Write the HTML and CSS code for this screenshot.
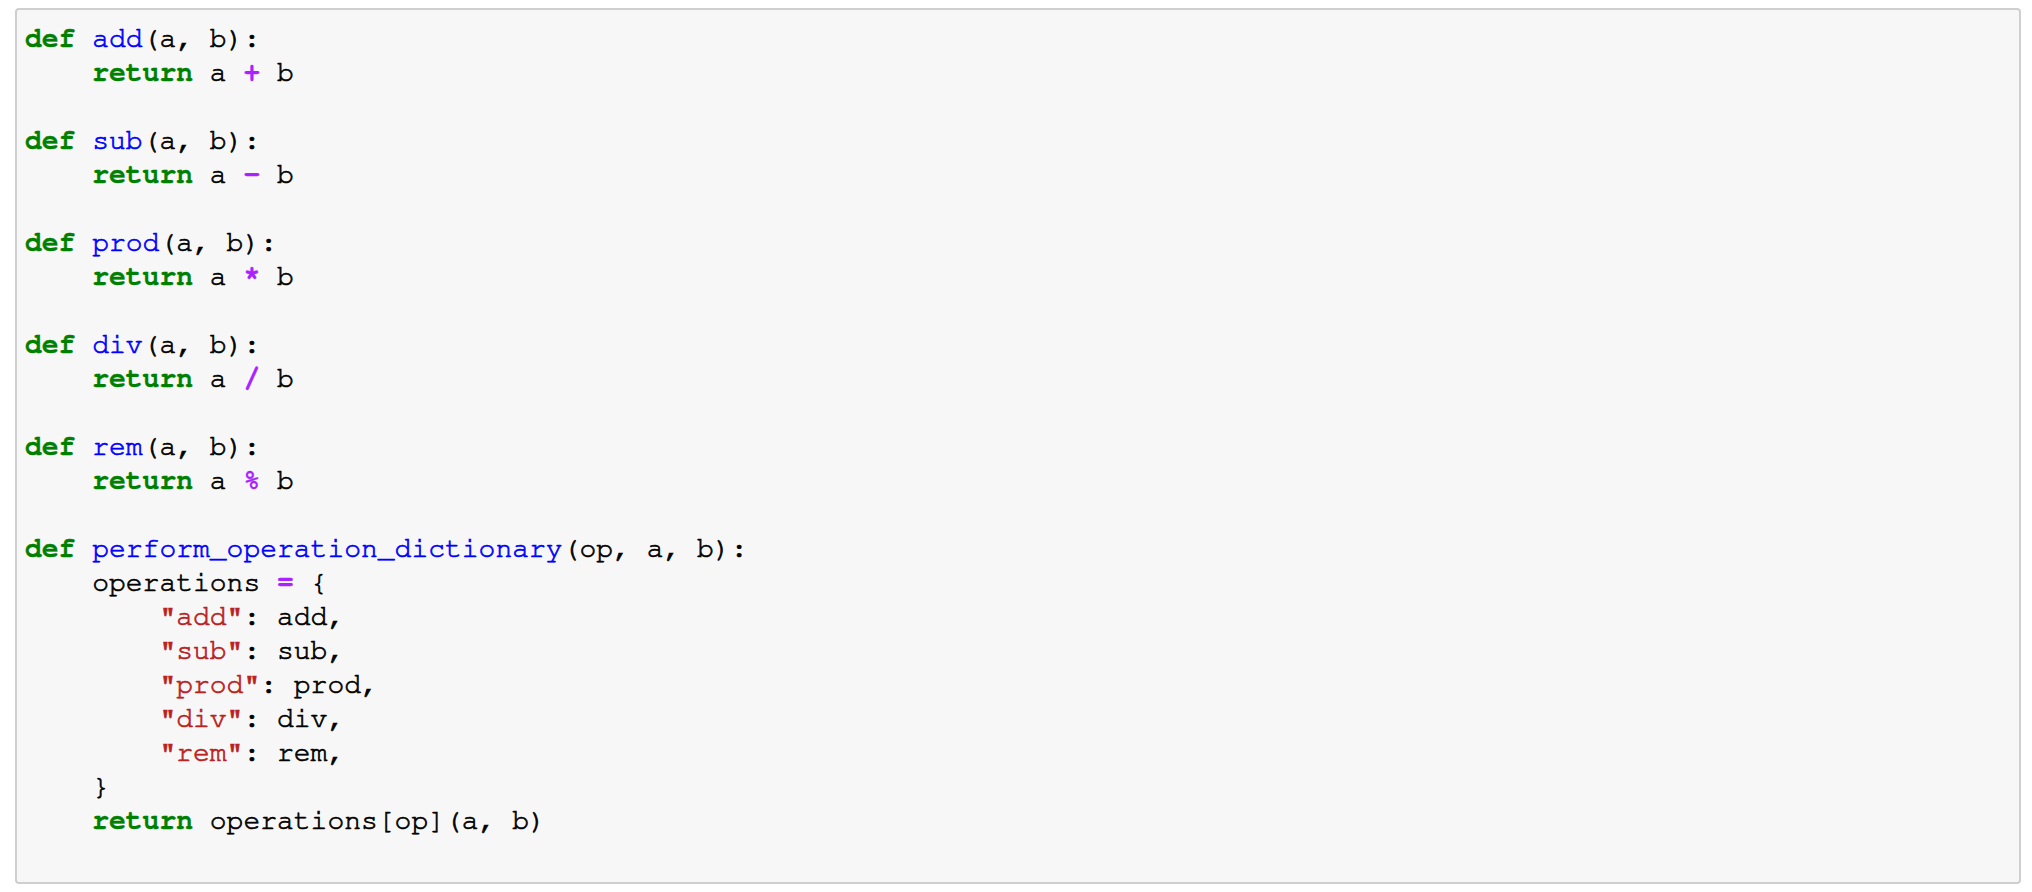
FILE: index.html
```html
<!DOCTYPE html>
<html>
<head>
<meta charset="utf-8">
<link rel="stylesheet" href="styles.css">
</head>
<body>
<div class="page">
<div class="cell">
<pre class="code"><span class="kw">def</span> <span class="fn">add</span>(a, b):
    <span class="kw">return</span> a <span class="op">+</span> b

<span class="kw">def</span> <span class="fn">sub</span>(a, b):
    <span class="kw">return</span> a <span class="op">-</span> b

<span class="kw">def</span> <span class="fn">prod</span>(a, b):
    <span class="kw">return</span> a <span class="op">*</span> b

<span class="kw">def</span> <span class="fn">div</span>(a, b):
    <span class="kw">return</span> a <span class="op">/</span> b

<span class="kw">def</span> <span class="fn">rem</span>(a, b):
    <span class="kw">return</span> a <span class="op">%</span> b

<span class="kw">def</span> <span class="fn">perform_operation_dictionary</span>(op, a, b):
    operations <span class="op">=</span> {
        <span class="str">"add"</span>: add,
        <span class="str">"sub"</span>: sub,
        <span class="str">"prod"</span>: prod,
        <span class="str">"div"</span>: div,
        <span class="str">"rem"</span>: rem,
    }
    <span class="kw">return</span> operations[op](a, b)</pre>
</div>
</div>
</body>
</html>
```

FILE: styles.css
```css
html, body {
  margin: 0;
  padding: 0;
  background: #ffffff;
}

.page {
  padding: 8px 11px 8px 15px;
}

.cell {
  background: #f7f7f7;
  border: 2px solid #cfcfcf;
  border-radius: 4px;
  padding: 12px 8px 44px 8px;
}

.code {
  margin: 0;
  font-family: "Nimbus Mono PS", "Nimbus Mono L", "FreeMono", "Liberation Mono", "Courier New", monospace;
  font-size: 28px;
  line-height: 34px;
  color: #000000;
  white-space: pre;
  -webkit-text-stroke: 0.7px currentColor;
}

.kw {
  color: #008000;
  font-weight: bold;
  -webkit-text-stroke: 0.3px currentColor;
}

.fn {
  color: #0000ff;
}

.op {
  color: #aa22ff;
  font-weight: bold;
  -webkit-text-stroke: 0.3px currentColor;
}

.str {
  color: #ba2121;
}
```
